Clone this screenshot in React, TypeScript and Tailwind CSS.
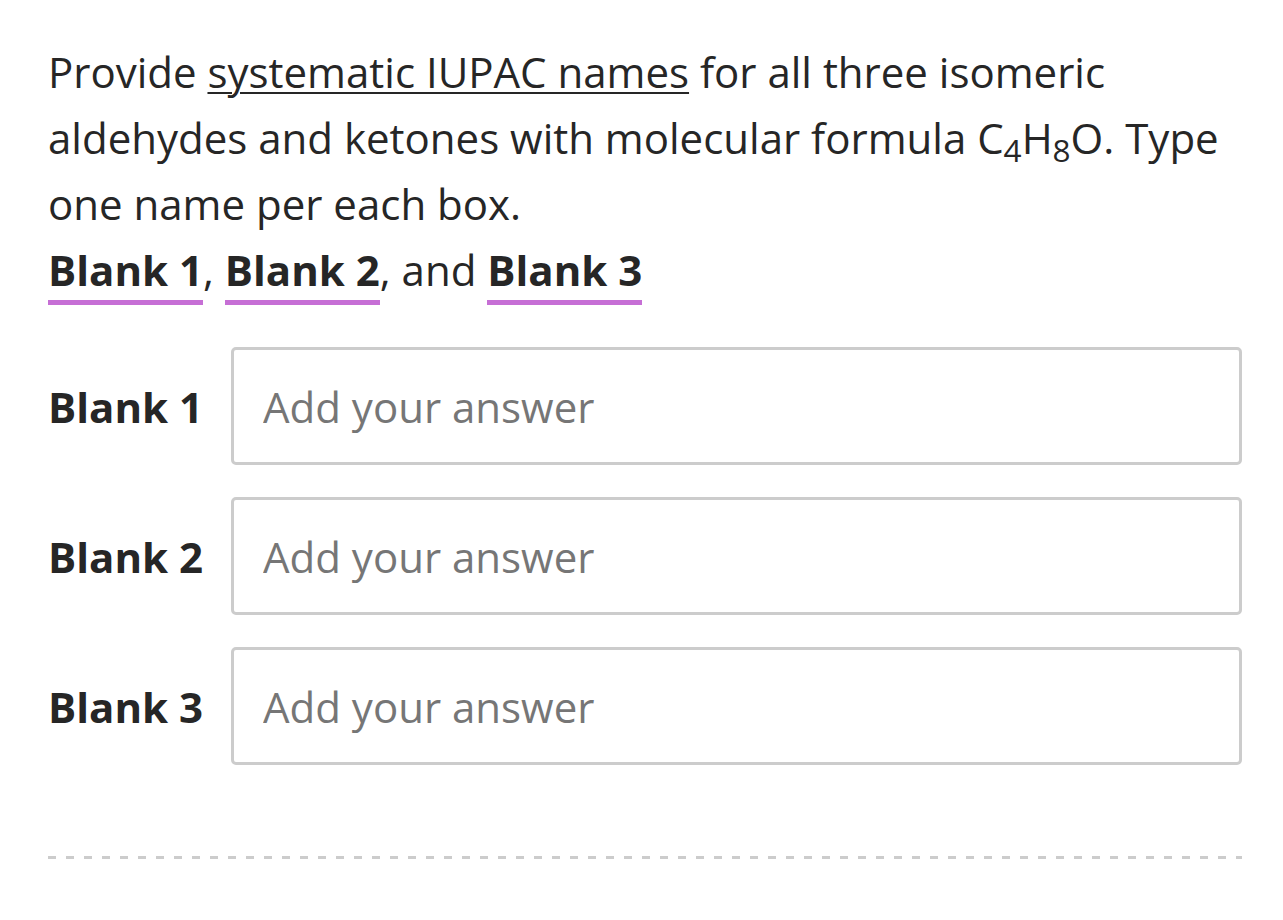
import React from 'react';

const blanks = ['Blank 1', 'Blank 2', 'Blank 3'];

const App: React.FC = () => {
  return (
    <div className="min-h-[920px] bg-white font-['Open_Sans',sans-serif] text-[#262626]">
      <div className="ml-[48px] w-[1194px] pt-[39px]">
        {/* Question */}
        <p className="text-[42px] leading-[66px]">
          Provide <span className="underline decoration-2 underline-offset-[4px]">systematic IUPAC names</span> for
          all three isomeric aldehydes and ketones with molecular formula C<sub>4</sub>H<sub>8</sub>O. Type one name per
          each box.
          <br />
          <span className="border-b-[5px] border-[#c66fd5] pb-[2px] font-bold">Blank 1</span>,{' '}
          <span className="border-b-[5px] border-[#c66fd5] pb-[2px] font-bold">Blank 2</span>, and{' '}
          <span className="border-b-[5px] border-[#c66fd5] pb-[2px] font-bold">Blank 3</span>
        </p>

        {/* Answers */}
        <div className="mt-[44px] flex flex-col gap-[32px]">
          {blanks.map((b) => (
            <div key={b} className="flex items-center">
              <label className="w-[183px] shrink-0 text-[42px] font-bold">{b}</label>
              <input
                type="text"
                placeholder="Add your answer"
                className="h-[118px] flex-1 rounded-[5px] border-[3px] border-[#cccccc] px-[29px] text-[42px] text-[#262626] outline-none placeholder:text-[#767676]"
              />
            </div>
          ))}
        </div>

        <div className="mt-[91px] h-[3px] bg-[repeating-linear-gradient(90deg,#cccccc_0_8px,transparent_8px_18px)]" />
      </div>
    </div>
  );
};

export default App;
